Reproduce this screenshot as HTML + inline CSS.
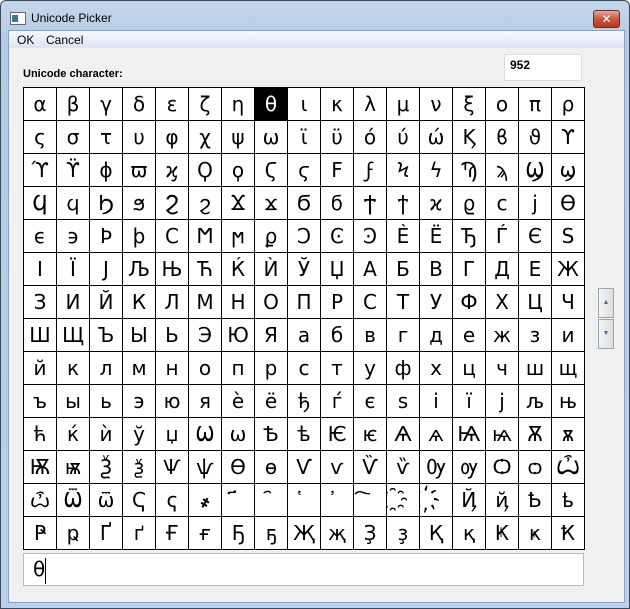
<!DOCTYPE html>
<html><head><meta charset="utf-8"><style>
body{margin:0;width:630px;height:609px;overflow:hidden;font-family:"Liberation Sans","DejaVu Sans",sans-serif;}
.win{position:absolute;left:0;top:0;width:628px;height:607px;border:1px solid #3a4a5a;border-radius:6px 6px 0 0;background:linear-gradient(#c5d7ec,#b3cbe6 40px,#b9d1ea);}
.title{position:absolute;left:30px;top:10px;font-size:12px;color:#000;}
.ico{position:absolute;left:9px;top:11px;width:14px;height:11px;background:#fff;border:1px solid #667;}
.ico:before{content:"";position:absolute;left:1px;top:2px;width:6px;height:7px;background:#3a7a8a;}
.close{position:absolute;left:592px;top:9px;width:25px;height:16px;border:1px solid #6b2a22;border-radius:3px;background:linear-gradient(#e8a99a,#c8553f 50%,#b83a22);color:#fff;font-size:12px;font-weight:bold;text-align:center;line-height:16px;}
.client{position:absolute;left:7px;top:29px;width:615px;height:571px;background:#f0f0f0;border:1px solid #8ba2bf;}
.menu{position:absolute;left:0;top:0;width:615px;height:17px;background:linear-gradient(#f6f8fc,#dde4f1);font-size:12px;}
.menu span{position:absolute;top:2px;}
.lbl{position:absolute;left:14px;top:37px;font-size:11px;font-weight:bold;}
.num{position:absolute;left:495px;top:23px;width:78px;height:27px;background:#fff;border:1px solid #ddd;font-size:12px;font-weight:bold;box-sizing:border-box;padding:3px 5px;}
table{position:absolute;left:14px;top:56px;border-collapse:collapse;}
td{width:32px;height:32px;border:1px solid #000;padding:0;text-align:center;font-family:"DejaVu Sans",sans-serif;font-size:20px;background:#fff;line-height:30px;overflow:hidden;}
td.sel{background:#000;color:#fff;}
.spin{position:absolute;left:589px;width:14px;height:28px;border:1px solid #9aa;background:linear-gradient(90deg,#f4f4f4,#ddd);font-size:7px;color:#5566aa;text-align:center;line-height:28px;}
.tb{position:absolute;left:14px;top:522px;width:561px;height:33px;background:#fff;border:1px solid #a9bdd3;box-sizing:border-box;font-family:"DejaVu Sans",sans-serif;font-size:20px;padding:3px 9px;}
.tb i{display:inline-block;width:1px;height:26px;background:#000;vertical-align:middle;font-style:normal;}
</style></head><body>
<div class="win">
<div class="ico"></div><div class="title">Unicode Picker</div>
<div class="close">✕</div>
<div class="client">
<div class="menu"><span style="left:8px">OK</span><span style="left:37px">Cancel</span></div>
<div class="lbl">Unicode character:</div>
<div class="num">952</div>
<table>
<tr><td>α</td><td>β</td><td>γ</td><td>δ</td><td>ε</td><td>ζ</td><td>η</td><td class="sel">θ</td><td>ι</td><td>κ</td><td>λ</td><td>μ</td><td>ν</td><td>ξ</td><td>ο</td><td>π</td><td>ρ</td></tr>
<tr><td>ς</td><td>σ</td><td>τ</td><td>υ</td><td>φ</td><td>χ</td><td>ψ</td><td>ω</td><td>ϊ</td><td>ϋ</td><td>ό</td><td>ύ</td><td>ώ</td><td>Ϗ</td><td>ϐ</td><td>ϑ</td><td>ϒ</td></tr>
<tr><td>ϓ</td><td>ϔ</td><td>ϕ</td><td>ϖ</td><td>ϗ</td><td>Ϙ</td><td>ϙ</td><td>Ϛ</td><td>ϛ</td><td>Ϝ</td><td>ϝ</td><td>Ϟ</td><td>ϟ</td><td>Ϡ</td><td>ϡ</td><td>Ϣ</td><td>ϣ</td></tr>
<tr><td>Ϥ</td><td>ϥ</td><td>Ϧ</td><td>ϧ</td><td>Ϩ</td><td>ϩ</td><td>Ϫ</td><td>ϫ</td><td>Ϭ</td><td>ϭ</td><td>Ϯ</td><td>ϯ</td><td>ϰ</td><td>ϱ</td><td>ϲ</td><td>ϳ</td><td>ϴ</td></tr>
<tr><td>ϵ</td><td>϶</td><td>Ϸ</td><td>ϸ</td><td>Ϲ</td><td>Ϻ</td><td>ϻ</td><td>ϼ</td><td>Ͻ</td><td>Ͼ</td><td>Ͽ</td><td>Ѐ</td><td>Ё</td><td>Ђ</td><td>Ѓ</td><td>Є</td><td>Ѕ</td></tr>
<tr><td>І</td><td>Ї</td><td>Ј</td><td>Љ</td><td>Њ</td><td>Ћ</td><td>Ќ</td><td>Ѝ</td><td>Ў</td><td>Џ</td><td>А</td><td>Б</td><td>В</td><td>Г</td><td>Д</td><td>Е</td><td>Ж</td></tr>
<tr><td>З</td><td>И</td><td>Й</td><td>К</td><td>Л</td><td>М</td><td>Н</td><td>О</td><td>П</td><td>Р</td><td>С</td><td>Т</td><td>У</td><td>Ф</td><td>Х</td><td>Ц</td><td>Ч</td></tr>
<tr><td>Ш</td><td>Щ</td><td>Ъ</td><td>Ы</td><td>Ь</td><td>Э</td><td>Ю</td><td>Я</td><td>а</td><td>б</td><td>в</td><td>г</td><td>д</td><td>е</td><td>ж</td><td>з</td><td>и</td></tr>
<tr><td>й</td><td>к</td><td>л</td><td>м</td><td>н</td><td>о</td><td>п</td><td>р</td><td>с</td><td>т</td><td>у</td><td>ф</td><td>х</td><td>ц</td><td>ч</td><td>ш</td><td>щ</td></tr>
<tr><td>ъ</td><td>ы</td><td>ь</td><td>э</td><td>ю</td><td>я</td><td>ѐ</td><td>ё</td><td>ђ</td><td>ѓ</td><td>є</td><td>ѕ</td><td>і</td><td>ї</td><td>ј</td><td>љ</td><td>њ</td></tr>
<tr><td>ћ</td><td>ќ</td><td>ѝ</td><td>ў</td><td>џ</td><td>Ѡ</td><td>ѡ</td><td>Ѣ</td><td>ѣ</td><td>Ѥ</td><td>ѥ</td><td>Ѧ</td><td>ѧ</td><td>Ѩ</td><td>ѩ</td><td>Ѫ</td><td>ѫ</td></tr>
<tr><td>Ѭ</td><td>ѭ</td><td>Ѯ</td><td>ѯ</td><td>Ѱ</td><td>ѱ</td><td>Ѳ</td><td>ѳ</td><td>Ѵ</td><td>ѵ</td><td>Ѷ</td><td>ѷ</td><td>Ѹ</td><td>ѹ</td><td>Ѻ</td><td>ѻ</td><td>Ѽ</td></tr>
<tr><td>ѽ</td><td>Ѿ</td><td>ѿ</td><td>Ҁ</td><td>ҁ</td><td>҂</td><td>&#x483;</td><td>&#x484;</td><td>&#x485;</td><td>&#x486;</td><td>&#x487;</td><td>&#x488;</td><td>&#x489;</td><td>Ҋ</td><td>ҋ</td><td>Ҍ</td><td>ҍ</td></tr>
<tr><td>Ҏ</td><td>ҏ</td><td>Ґ</td><td>ґ</td><td>Ғ</td><td>ғ</td><td>Ҕ</td><td>ҕ</td><td>Җ</td><td>җ</td><td>Ҙ</td><td>ҙ</td><td>Қ</td><td>қ</td><td>Ҝ</td><td>ҝ</td><td>Ҟ</td></tr>
</table>
<div class="spin" style="top:257px">▲</div>
<div class="spin" style="top:288px">▼</div>
<div class="tb">θ<i></i></div>
</div>
</div>
</body></html>
